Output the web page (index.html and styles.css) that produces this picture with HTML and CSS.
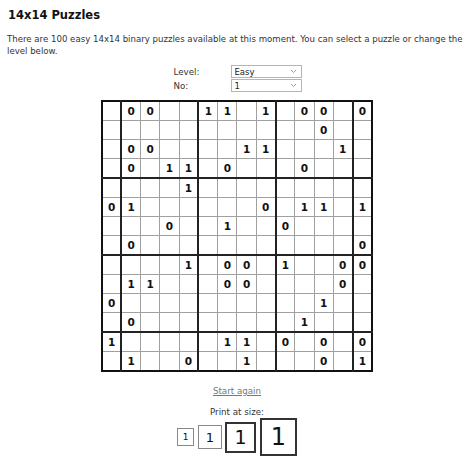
FILE: index.html
```html
<!DOCTYPE html>
<html>
<head>
<meta charset="utf-8">
<link rel="stylesheet" href="styles.css">
</head>
<body>
<h1 class="title">14x14 Puzzles</h1>
<p class="intro">There are 100 easy 14x14 binary puzzles available at this moment. You can select a puzzle or change the level below.</p>
<div class="chooser">
  <div class="chooser-row">
    <span class="label">Level:</span>
    <div class="select"><span>Easy</span><svg class="chev" width="7" height="5" viewBox="0 0 7 5"><path d="M1 1l2.5 2.5L6 1" fill="none" stroke="#999" stroke-width="1"/></svg></div>
  </div>
  <div class="chooser-row">
    <span class="label">No:</span>
    <div class="select"><span>1</span><svg class="chev" width="7" height="5" viewBox="0 0 7 5"><path d="M1 1l2.5 2.5L6 1" fill="none" stroke="#999" stroke-width="1"/></svg></div>
  </div>
</div>
<div class="board-wrap">
<table class="board">
<tr><td></td><td>0</td><td>0</td><td></td><td></td><td>1</td><td>1</td><td></td><td>1</td><td></td><td>0</td><td>0</td><td></td><td>0</td></tr>
<tr><td></td><td></td><td></td><td></td><td></td><td></td><td></td><td></td><td></td><td></td><td></td><td>0</td><td></td><td></td></tr>
<tr><td></td><td>0</td><td>0</td><td></td><td></td><td></td><td></td><td>1</td><td>1</td><td></td><td></td><td></td><td>1</td><td></td></tr>
<tr><td></td><td>0</td><td></td><td>1</td><td>1</td><td></td><td>0</td><td></td><td></td><td></td><td>0</td><td></td><td></td><td></td></tr>
<tr><td></td><td></td><td></td><td></td><td>1</td><td></td><td></td><td></td><td></td><td></td><td></td><td></td><td></td><td></td></tr>
<tr><td>0</td><td>1</td><td></td><td></td><td></td><td></td><td></td><td></td><td>0</td><td></td><td>1</td><td>1</td><td></td><td>1</td></tr>
<tr><td></td><td></td><td></td><td>0</td><td></td><td></td><td>1</td><td></td><td></td><td>0</td><td></td><td></td><td></td><td></td></tr>
<tr><td></td><td>0</td><td></td><td></td><td></td><td></td><td></td><td></td><td></td><td></td><td></td><td></td><td></td><td>0</td></tr>
<tr><td></td><td></td><td></td><td></td><td>1</td><td></td><td>0</td><td>0</td><td></td><td>1</td><td></td><td></td><td>0</td><td>0</td></tr>
<tr><td></td><td>1</td><td>1</td><td></td><td></td><td></td><td>0</td><td>0</td><td></td><td></td><td></td><td></td><td>0</td><td></td></tr>
<tr><td>0</td><td></td><td></td><td></td><td></td><td></td><td></td><td></td><td></td><td></td><td></td><td>1</td><td></td><td></td></tr>
<tr><td></td><td>0</td><td></td><td></td><td></td><td></td><td></td><td></td><td></td><td></td><td>1</td><td></td><td></td><td></td></tr>
<tr><td>1</td><td></td><td></td><td></td><td></td><td></td><td>1</td><td>1</td><td></td><td>0</td><td></td><td>0</td><td></td><td>0</td></tr>
<tr><td></td><td>1</td><td></td><td></td><td>0</td><td></td><td></td><td>1</td><td></td><td></td><td></td><td>0</td><td></td><td>1</td></tr>
</table>
</div>
<div class="after">
  <a class="restart" href="#">Start again</a>
  <div class="print-label">Print at size:</div>
  <div class="sizes">
    <span class="size s1">1</span>
    <span class="size s2">1</span>
    <span class="size s3">1</span>
    <span class="size s4">1</span>
  </div>
</div>
</body>
</html>
```
FILE: styles.css
```css
html, body {
  margin: 0;
  padding: 0;
  background: #fff;
}
body {
  padding: 0 8px;
  font-family: "DejaVu Sans", Verdana, sans-serif;
  color: #222;
}
.title {
  margin: 0;
  padding-top: 8px;
  font-size: 11.5px;
  line-height: 14px;
  font-weight: bold;
  color: #111;
}
.intro {
  margin: 11px -6px 0 -1px;
  font-size: 8.6px;
  line-height: 12px;
  color: #333;
}
.chooser {
  display: flex;
  flex-direction: column;
  align-items: center;
  margin-top: 8px;
  gap: 1px;
}
.chooser-row {
  display: grid;
  grid-template-columns: 58px 71px;
  align-items: center;
  font-size: 8.7px;
  color: #333;
}
.label {
  padding-left: 1px;
}
.select {
  box-sizing: border-box;
  height: 13px;
  border: 1px solid #b5b5b5;
  display: flex;
  align-items: center;
  justify-content: space-between;
  padding: 0 4px 0 3px;
  font-size: 8.5px;
  color: #222;
}
.chev {
  display: block;
}
.board-wrap {
  display: flex;
  justify-content: center;
  margin-top: 8px;
}
.board {
  border-collapse: collapse;
  table-layout: fixed;
  width: 272px;
  height: 272px;
  border: 2px solid #111;
}
.board td {
  border: 1px solid #a0a0a0;
  padding: 0;
  text-align: center;
  vertical-align: middle;
  font-weight: bold;
  font-size: 10.5px;
  color: #111;
}
.board td:nth-child(1),
.board td:nth-child(5),
.board td:nth-child(9),
.board td:nth-child(13) {
  border-right: 2px solid #222;
}
.board tr:nth-child(4) td,
.board tr:nth-child(8) td,
.board tr:nth-child(12) td {
  border-bottom: 2px solid #222;
}
.after {
  display: flex;
  flex-direction: column;
  align-items: center;
  font-size: 8.7px;
}
.restart {
  margin-top: 14px;
  color: #777;
  text-decoration: underline;
}
.print-label {
  margin-top: 11px;
  color: #333;
}
.sizes {
  display: flex;
  align-items: center;
  gap: 3px;
  margin-top: 1px;
}
.size {
  box-sizing: border-box;
  display: flex;
  align-items: center;
  justify-content: center;
  color: #111;
  background: #fff;
}
.s1 { width: 17px; height: 18px; border: 1px solid #888; font-size: 9px; }
.s2 { width: 24px; height: 24px; border: 1px solid #888; font-size: 13px; margin-left: 1px; }
.s3 { width: 31px; height: 31px; border: 2px solid #333; font-size: 19px; }
.s4 { width: 37px; height: 38px; border: 2px solid #333; font-size: 24px; margin-left: 1px; }
```
